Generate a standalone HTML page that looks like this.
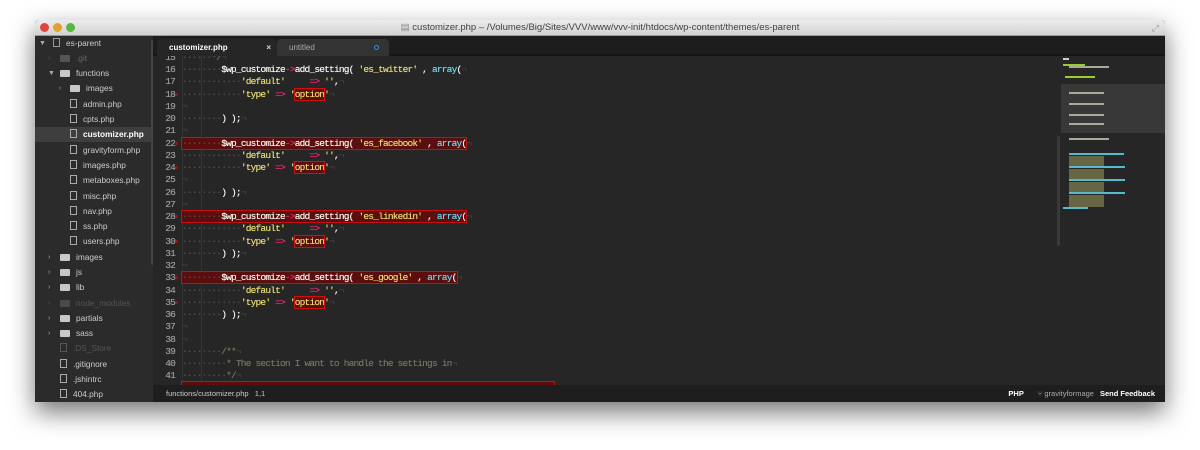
<!DOCTYPE html>
<html><head><meta charset="utf-8"><style>
*{margin:0;padding:0;box-sizing:border-box}
body{width:1200px;height:450px;background:#fff;position:relative;overflow:hidden;font-family:"Liberation Sans",sans-serif}
.win{position:absolute;left:35px;top:20px;width:1130px;height:382px;background:#262626;box-shadow:0 10px 25px rgba(0,0,0,.55);border-radius:4px 4px 0 0;overflow:hidden}
.title{position:absolute;left:0;top:0;width:100%;height:16px;background:linear-gradient(#ececec,#d2d2d2);border-bottom:1px solid #999;font-size:9.5px;color:#444;text-align:center;line-height:16px}
.dot{position:absolute;top:3px;width:9px;height:9px;border-radius:50%}
.side{position:absolute;left:0;top:16px;width:118px;height:366px;background:#2b2b2b;font-size:8.3px;color:#ccc}
.side .r{position:absolute;left:0;width:118px;height:15px;line-height:15px;white-space:nowrap}
.fold{display:inline-block;width:10px;height:7px;background:#c8c8c8;vertical-align:-1px;margin-right:6px;border-radius:1px}
.file{display:inline-block;width:7px;height:9px;border:1px solid #aaa;vertical-align:-1px;margin-right:6px}
.arr{position:absolute;font-size:7px;color:#aaa}
.tabs{position:absolute;left:118px;top:16px;width:1012px;height:20px;background:#1d1d1d;border-bottom:2px solid #151515}
.tab{position:absolute;top:3px;height:17px;font-size:8px;line-height:17px;padding-left:12px}
.code{position:absolute;left:118px;top:36px;width:1012px;height:329px;background:#262626;overflow:hidden}
.lines{position:absolute;left:0;top:-4px;font-family:"Liberation Mono",monospace;font-size:9.5px;letter-spacing:-0.8px;line-height:12.24px;white-space:pre;text-shadow:0 0 0.4px currentColor}
.ln{position:absolute;left:0;width:22px;text-align:right;color:#9a9a9a}
.tx{position:absolute;left:29px;color:#f8f8f2}
.d{color:#505050}.e{color:#444}.v{color:#f8f8f2}.p{color:#f92672}.s{color:#e6db74}.c{color:#66d9ef}.m{color:#75715e}
.hl{background:#5c0d0d;outline:1px solid #c41010}
.ob{background:#5c0d0d;outline:1px solid #d01010}
.mk{position:absolute;left:22px;width:3px;height:3px;background:#a01010;border-radius:50%}
.status{position:absolute;left:118px;top:365px;width:1012px;height:17px;background:#1e1e1e;font-size:7.5px;color:#ccc;line-height:17px}
.mini{position:absolute;left:908px;top:0;width:104px;height:329px}
.ml{position:absolute;height:1.5px}
</style></head><body>
<div class="win">
 <div class="title">
  <span class="dot" style="left:5px;background:#e0463f"></span><span class="dot" style="left:18px;background:#e0a12f"></span><span class="dot" style="left:31px;background:#58b540"></span>
  <span style="color:#888">▤</span> customizer.php – /Volumes/Big/Sites/VVV/www/vvv-init/htdocs/wp-content/themes/es-parent
  <span style="position:absolute;right:6px;color:#999;font-size:9px">⤢</span>
 </div>
 <div class="side">
  <div class="r" style="top:0px;padding-left:18px"><span class="arr" style="left:4px">▼</span><span class="file" style="border-color:#999"></span>es-parent</div>
  <div class="r" style="top:15px;padding-left:25px;color:#666"><span class="arr" style="left:13px;color:#555">›</span><span class="fold" style="background:#555"></span>.git</div>
  <div class="r" style="top:30px;padding-left:25px"><span class="arr" style="left:13px">▼</span><span class="fold"></span>functions</div>
  <div class="r" style="top:45px;padding-left:35px"><span class="arr" style="left:24px">›</span><span class="fold"></span>images</div>
  <div class="r" style="top:61px;padding-left:35px"><span class="file"></span>admin.php</div>
  <div class="r" style="top:76px;padding-left:35px"><span class="file"></span>cpts.php</div>
  <div class="r" style="top:91px;padding-left:35px;background:#3e3e3e;color:#fff;font-weight:bold"><span class="file"></span>customizer.php</div>
  <div class="r" style="top:107px;padding-left:35px"><span class="file"></span>gravityform.php</div>
  <div class="r" style="top:122px;padding-left:35px"><span class="file"></span>images.php</div>
  <div class="r" style="top:137px;padding-left:35px"><span class="file"></span>metaboxes.php</div>
  <div class="r" style="top:153px;padding-left:35px"><span class="file"></span>misc.php</div>
  <div class="r" style="top:168px;padding-left:35px"><span class="file"></span>nav.php</div>
  <div class="r" style="top:183px;padding-left:35px"><span class="file"></span>ss.php</div>
  <div class="r" style="top:198px;padding-left:35px"><span class="file"></span>users.php</div>
  <div class="r" style="top:214px;padding-left:25px"><span class="arr" style="left:13px">›</span><span class="fold"></span>images</div>
  <div class="r" style="top:229px;padding-left:25px"><span class="arr" style="left:13px">›</span><span class="fold"></span>js</div>
  <div class="r" style="top:244px;padding-left:25px"><span class="arr" style="left:13px">›</span><span class="fold"></span>lib</div>
  <div class="r" style="top:260px;padding-left:25px;color:#555"><span class="arr" style="left:13px;color:#555">›</span><span class="fold" style="background:#4a4a4a"></span>node_modules</div>
  <div class="r" style="top:275px;padding-left:25px"><span class="arr" style="left:13px">›</span><span class="fold"></span>partials</div>
  <div class="r" style="top:290px;padding-left:25px"><span class="arr" style="left:13px">›</span><span class="fold"></span>sass</div>
  <div class="r" style="top:305px;padding-left:25px;color:#555"><span class="file" style="border-color:#555"></span>.DS_Store</div>
  <div class="r" style="top:321px;padding-left:25px"><span class="file"></span>.gitignore</div>
  <div class="r" style="top:336px;padding-left:25px"><span class="file"></span>.jshintrc</div>
  <div class="r" style="top:351px;padding-left:25px"><span class="file"></span>404.php</div>
  <div style="position:absolute;left:116px;top:4px;width:3px;height:225px;background:#444;border-radius:2px"></div>
 </div>
 <div class="tabs">
  <div class="tab" style="left:4px;width:120px;background:#262626;color:#fff;font-weight:bold;border-radius:4px 4px 0 0">customizer.php<span style="position:absolute;right:6px;color:#ddd">×</span></div>
  <div class="tab" style="left:124px;width:112px;background:#333;color:#aaa;border-radius:4px 4px 0 0">untitled<span style="position:absolute;right:10px;top:6px;width:5px;height:5px;border:1.5px solid #2a8cf0;border-radius:50%"></span></div>
 </div>
 <div class="code">
  <div style="position:absolute;left:29px;top:0;width:1px;height:329px;background:#333"></div>
  <div style="position:absolute;left:48px;top:0;width:1px;height:329px;background:#333"></div>
  <div class="lines">
<div class="ln" style="top:0">15</div><div class="tx" style="top:0"><span class="d">······</span><span class="m">*/</span><span class="e">¬</span></div>
<div class="ln" style="top:12.24px">16</div><div class="tx" style="top:12.24px"><span class="d">········</span>$wp_customize<span class="p">-&gt;</span>add_setting( <span class="s">'es_twitter'</span> , <span class="c">array</span>(<span class="e">¬</span></div>
<div class="ln" style="top:24.48px">17</div><div class="tx" style="top:24.48px"><span class="d">············</span><span class="s">'default'</span>     <span class="p">=&gt;</span> <span class="s">''</span>,<span class="e">¬</span></div>
<div class="mk" style="top:41px"></div><div class="ln" style="top:36.72px">18</div><div class="tx" style="top:36.72px"><span class="d">············</span><span class="s">'type'</span> <span class="p">=&gt;</span> <span class="s">'<span class="ob">option</span>'</span><span class="e">¬</span></div>
<div class="ln" style="top:48.96px">19</div><div class="tx" style="top:48.96px"><span class="e">¬</span></div>
<div class="ln" style="top:61.2px">20</div><div class="tx" style="top:61.2px"><span class="d">········</span>) );<span class="e">¬</span></div>
<div class="ln" style="top:73.44px">21</div><div class="tx" style="top:73.44px"><span class="e">¬</span></div>
<div class="mk" style="top:90px"></div><div class="ln" style="top:85.68px">22</div><div class="tx" style="top:85.68px"><span class="hl"><span class="d">········</span>$wp_customize<span class="p">-&gt;</span>add_setting( <span class="s">'es_facebook'</span> , <span class="c">array</span>(</span><span class="e">¬</span></div>
<div class="ln" style="top:97.92px">23</div><div class="tx" style="top:97.92px"><span class="d">············</span><span class="s">'default'</span>     <span class="p">=&gt;</span> <span class="s">''</span>,<span class="e">¬</span></div>
<div class="mk" style="top:114px"></div><div class="ln" style="top:110.16px">24</div><div class="tx" style="top:110.16px"><span class="d">············</span><span class="s">'type'</span> <span class="p">=&gt;</span> <span class="s">'<span class="ob">option</span>'</span><span class="e">¬</span></div>
<div class="ln" style="top:122.4px">25</div><div class="tx" style="top:122.4px"><span class="e">¬</span></div>
<div class="ln" style="top:134.64px">26</div><div class="tx" style="top:134.64px"><span class="d">········</span>) );<span class="e">¬</span></div>
<div class="ln" style="top:146.88px">27</div><div class="tx" style="top:146.88px"><span class="e">¬</span></div>
<div class="mk" style="top:163px"></div><div class="ln" style="top:159.12px">28</div><div class="tx" style="top:159.12px"><span class="hl"><span class="d">········</span>$wp_customize<span class="p">-&gt;</span>add_setting( <span class="s">'es_linkedin'</span> , <span class="c">array</span>(</span><span class="e">¬</span></div>
<div class="ln" style="top:171.36px">29</div><div class="tx" style="top:171.36px"><span class="d">············</span><span class="s">'default'</span>     <span class="p">=&gt;</span> <span class="s">''</span>,<span class="e">¬</span></div>
<div class="mk" style="top:188px"></div><div class="ln" style="top:183.6px">30</div><div class="tx" style="top:183.6px"><span class="d">············</span><span class="s">'type'</span> <span class="p">=&gt;</span> <span class="s">'<span class="ob">option</span>'</span><span class="e">¬</span></div>
<div class="ln" style="top:195.84px">31</div><div class="tx" style="top:195.84px"><span class="d">········</span>) );<span class="e">¬</span></div>
<div class="ln" style="top:208.08px">32</div><div class="tx" style="top:208.08px"><span class="e">¬</span></div>
<div class="mk" style="top:224px"></div><div class="ln" style="top:220.32px">33</div><div class="tx" style="top:220.32px"><span class="hl"><span class="d">········</span>$wp_customize<span class="p">-&gt;</span>add_setting( <span class="s">'es_google'</span> , <span class="c">array</span>(</span><span class="e">¬</span></div>
<div class="ln" style="top:232.56px">34</div><div class="tx" style="top:232.56px"><span class="d">············</span><span class="s">'default'</span>     <span class="p">=&gt;</span> <span class="s">''</span>,<span class="e">¬</span></div>
<div class="mk" style="top:249px"></div><div class="ln" style="top:244.8px">35</div><div class="tx" style="top:244.8px"><span class="d">············</span><span class="s">'type'</span> <span class="p">=&gt;</span> <span class="s">'<span class="ob">option</span>'</span><span class="e">¬</span></div>
<div class="ln" style="top:257.04px">36</div><div class="tx" style="top:257.04px"><span class="d">········</span>) );<span class="e">¬</span></div>
<div class="ln" style="top:269.28px">37</div><div class="tx" style="top:269.28px"><span class="e">¬</span></div>
<div class="ln" style="top:281.52px">38</div><div class="tx" style="top:281.52px"><span class="e">¬</span></div>
<div class="ln" style="top:293.76px">39</div><div class="tx" style="top:293.76px"><span class="d">········</span><span class="m">/**</span><span class="e">¬</span></div>
<div class="ln" style="top:306px">40</div><div class="tx" style="top:306px"><span class="d">·········</span><span class="m">* The section I want to handle the settings in</span><span class="e">¬</span></div>
<div class="ln" style="top:318.24px">41</div><div class="tx" style="top:318.24px"><span class="d">·········</span><span class="m">*/</span><span class="e">¬</span></div>
<div class="tx" style="top:330.48px"><span class="hl" style="display:inline-block;width:372px">&nbsp;</span></div>
  </div>
  <div style="position:absolute;left:904px;top:80px;width:3px;height:110px;background:#3a3a3a;border-radius:2px"></div>
  <div class="mini">
   <div style="position:absolute;left:0;top:28px;width:104px;height:49px;background:#383838"></div>
   <div class="ml" style="left:2px;top:2px;width:6px;background:#ccc"></div>
   <div class="ml" style="left:2px;top:8px;width:22px;background:#9c3;"></div>
   <div class="ml" style="left:8px;top:10px;width:40px;background:#aa9"></div>
   <div class="ml" style="left:4px;top:20px;width:30px;background:#9c3"></div>
   <div class="ml" style="left:8px;top:36px;width:35px;background:#aa9"></div>
   <div class="ml" style="left:8px;top:47px;width:35px;background:#aa9"></div>
   <div class="ml" style="left:8px;top:58px;width:35px;background:#aa9"></div>
   <div class="ml" style="left:8px;top:67px;width:35px;background:#aa9"></div>
   <div class="ml" style="left:8px;top:82px;width:40px;background:#aa9"></div>
   <div class="ml" style="left:8px;top:97px;width:55px;background:#5bc"></div>
   <div class="ml" style="left:8px;top:100px;width:35px;height:12px;background:#664"></div>
   <div class="ml" style="left:8px;top:110px;width:56px;background:#5bc"></div>
   <div class="ml" style="left:8px;top:113px;width:35px;height:12px;background:#664"></div>
   <div class="ml" style="left:8px;top:123px;width:56px;background:#5bc"></div>
   <div class="ml" style="left:8px;top:126px;width:35px;height:12px;background:#664"></div>
   <div class="ml" style="left:8px;top:136px;width:56px;background:#5bc"></div>
   <div class="ml" style="left:8px;top:139px;width:35px;height:12px;background:#664"></div>
   <div class="ml" style="left:2px;top:151px;width:25px;background:#5bc"></div>
  </div>
 </div>
 <div class="status">
  <span style="position:absolute;left:13px">functions/customizer.php &nbsp; 1,1</span>
  <span style="position:absolute;right:10px;font-weight:bold;color:#fff">PHP <span style="font-weight:normal;color:#aaa;margin:0 6px 0 12px">⑂ gravityformage</span>Send Feedback</span>
 </div>
</div>
</body></html>
